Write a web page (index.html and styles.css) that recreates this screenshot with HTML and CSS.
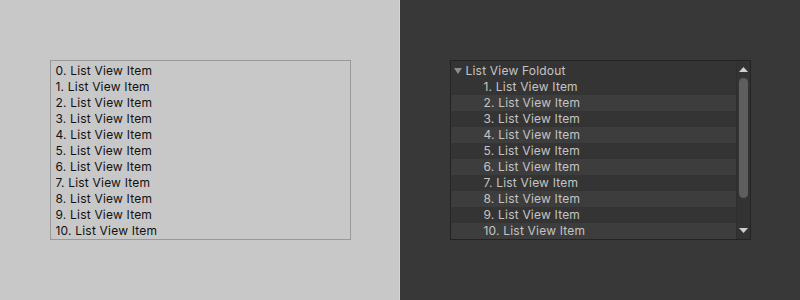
FILE: index.html
```html
<!DOCTYPE html>
<html lang="en">
<head>
	<meta charset="UTF-8">
	<title>List View</title>
	<link rel="stylesheet" href="styles.css">
</head>
<body>
	<div class="pane pane-light">
		<ul class="list list-light">
			<li>0. List View Item</li>
			<li>1. List View Item</li>
			<li>2. List View Item</li>
			<li>3. List View Item</li>
			<li>4. List View Item</li>
			<li>5. List View Item</li>
			<li>6. List View Item</li>
			<li>7. List View Item</li>
			<li>8. List View Item</li>
			<li>9. List View Item</li>
			<li>10. List View Item</li>
		</ul>
	</div>

	<div class="pane pane-dark">
		<div class="list list-dark">
			<div class="rows">
				<div class="foldout">
					<svg class="arrow" width="8" height="6" viewBox="0 0 8 6"><path d="M0 0 L8 0 L4 6 Z" fill="#8c8c8c"/></svg>
					<span>List View Foldout</span>
				</div>
				<ul class="items">
					<li>1. List View Item</li>
					<li>2. List View Item</li>
					<li>3. List View Item</li>
					<li>4. List View Item</li>
					<li>5. List View Item</li>
					<li>6. List View Item</li>
					<li>7. List View Item</li>
					<li>8. List View Item</li>
					<li>9. List View Item</li>
					<li>10. List View Item</li>
				</ul>
			</div>
			<div class="scrollbar">
				<svg class="scroll-btn" width="9" height="5" viewBox="0 0 9 5"><path d="M0 5 L4.5 0 L9 5 Z" fill="#d0d0d0"/></svg>
				<div class="track"><div class="thumb"></div></div>
				<svg class="scroll-btn" width="9" height="5" viewBox="0 0 9 5"><path d="M0 0 L9 0 L4.5 5 Z" fill="#d0d0d0"/></svg>
			</div>
		</div>
	</div>
</body>
</html>
```

FILE: styles.css
```css
ul,li{list-style: none;margin:0;padding:0;}
body{margin:0;display:flex;width:800px;height:300px;font-family: Inter, "Noto Sans", sans-serif;font-size:12px;letter-spacing:0.2px;}
.pane{width:400px;height:300px;display:flex;align-items:center;justify-content:center;}
.pane-light{background-color:#c8c8c8;box-shadow:inset -1px 0 #d4d4d4;}
.pane-dark{background-color:#383838;}

.list{box-sizing:border-box;width:301px;height:180px;}
.list li{height:16px;line-height:16px;white-space:nowrap;}

.list-light{border:1px solid #999;padding:2px 4px 0 5px;color:#111;}

.list-dark{display:flex;border:1px solid #232323;background-color:#343434;color:#c4c4c4;padding-top:1px;}
.rows{flex:1;padding-top:1px;}
.foldout{height:16px;line-height:16px;display:flex;align-items:center;padding-left:3px;color:#c4c4c4;}
.foldout .arrow{margin-right:4px;}
.items li{padding-left:33px;}
.items li:nth-child(even){background-color:#3d3d3d;}

.scrollbar{width:13px;display:flex;flex-direction:column;align-items:center;border-left:1px solid #2e2e2e;background-color:#333;}
.scroll-btn{margin:5px 0 6px;}
.track{flex:1;width:100%;display:flex;justify-content:center;}
.thumb{width:9px;height:120px;border-radius:5px;background-color:#5e5e5e;}
.scrollbar .scroll-btn:last-child{margin:6px 0 6px;}
```
